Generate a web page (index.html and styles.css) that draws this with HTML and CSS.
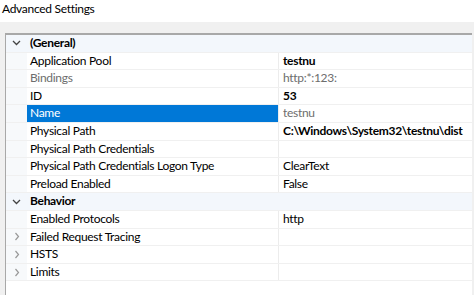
FILE: index.html
```html
<!DOCTYPE html>
<html lang="en">
<head>
    <meta charset="UTF-8">
    <title>Advanced Settings</title>
    <link rel="stylesheet" href="styles.css">
</head>
<body>
    <div class="title">Advanced Settings</div>
    <div class="panel">
        <div class="grid">
            <div class="row cat">
                <div class="gutter"><svg width="9" height="6" viewBox="0 0 9 6"><polyline points="1,1 4.5,4.5 8,1" fill="none" stroke="#444" stroke-width="1.3"/></svg></div>
                <div class="name">(General)</div>
            </div>
            <div class="row">
                <div class="gutter"></div>
                <div class="name">Application Pool</div>
                <div class="value bold">testnu</div>
            </div>
            <div class="row dim">
                <div class="gutter"></div>
                <div class="name">Bindings</div>
                <div class="value">http:*:123:</div>
            </div>
            <div class="row">
                <div class="gutter"></div>
                <div class="name">ID</div>
                <div class="value bold">53</div>
            </div>
            <div class="row selected">
                <div class="gutter"></div>
                <div class="name">Name</div>
                <div class="value gray">testnu</div>
            </div>
            <div class="row">
                <div class="gutter"></div>
                <div class="name">Physical Path</div>
                <div class="value bold">C:\Windows\System32\testnu\dist</div>
            </div>
            <div class="row">
                <div class="gutter"></div>
                <div class="name">Physical Path Credentials</div>
                <div class="value"></div>
            </div>
            <div class="row">
                <div class="gutter"></div>
                <div class="name">Physical Path Credentials Logon Type</div>
                <div class="value">ClearText</div>
            </div>
            <div class="row">
                <div class="gutter"></div>
                <div class="name">Preload Enabled</div>
                <div class="value">False</div>
            </div>
            <div class="row cat">
                <div class="gutter"><svg width="9" height="6" viewBox="0 0 9 6"><polyline points="1,1 4.5,4.5 8,1" fill="none" stroke="#444" stroke-width="1.3"/></svg></div>
                <div class="name">Behavior</div>
            </div>
            <div class="row">
                <div class="gutter"></div>
                <div class="name">Enabled Protocols</div>
                <div class="value">http</div>
            </div>
            <div class="row">
                <div class="gutter"><svg width="6" height="9" viewBox="0 0 6 9"><polyline points="1.5,1 4.5,4.5 1.5,8" fill="none" stroke="#999" stroke-width="1.2"/></svg></div>
                <div class="name">Failed Request Tracing</div>
                <div class="value"></div>
            </div>
            <div class="row">
                <div class="gutter"><svg width="6" height="9" viewBox="0 0 6 9"><polyline points="1.5,1 4.5,4.5 1.5,8" fill="none" stroke="#999" stroke-width="1.2"/></svg></div>
                <div class="name">HSTS</div>
                <div class="value"></div>
            </div>
            <div class="row">
                <div class="gutter"><svg width="6" height="9" viewBox="0 0 6 9"><polyline points="1.5,1 4.5,4.5 1.5,8" fill="none" stroke="#999" stroke-width="1.2"/></svg></div>
                <div class="name">Limits</div>
                <div class="value"></div>
            </div>
        </div>
    </div>
</body>
</html>
```

FILE: styles.css
```css
body {
    margin: 0;
    background-color: white;
    font-family: Lato, "Noto Sans", sans-serif;
    font-size: 12px;
    letter-spacing: -0.3px;
    color: #000;
    height: 295px;
    overflow: hidden;
}
.title {
    height: 22px;
    line-height: 17px;
    padding-left: 2px;
    background-color: white;
}
.panel {
    background-color: #f0f0f0;
    padding-top: 11px;
    padding-left: 5px;
    padding-right: 2px;
    height: 262px;
}
.grid {
    background-color: white;
    border-top: 2px solid #a8a8a8;
    border-left: 1px solid #a8a8a8;
    height: 260px;
}
.row {
    display: flex;
    height: 17.6px;
    box-sizing: border-box;
    border-bottom: 1px solid #f0f0f0;
    line-height: 16px;
}
.gutter {
    width: 21px;
    display: flex;
    align-items: center;
    justify-content: center;
    background-color: #f7f9fb;
}
.name {
    width: 248px;
    padding-left: 3px;
    white-space: nowrap;
    overflow: hidden;
    border-right: 1px solid #ececec;
}
.value {
    flex: 1;
    padding-left: 4px;
    white-space: nowrap;
    overflow: hidden;
}
.cat {
    background-color: #f3f7fc;
    font-weight: bold;
}
.cat .gutter {
    background-color: #f3f7fc;
}
.cat .name {
    border-right: none;
}
.bold {
    font-weight: bold;
}
.dim .name, .dim .value, .gray {
    color: #6d6d6d;
}
.selected .name {
    background-color: #0078d7;
    color: white;
}
```
